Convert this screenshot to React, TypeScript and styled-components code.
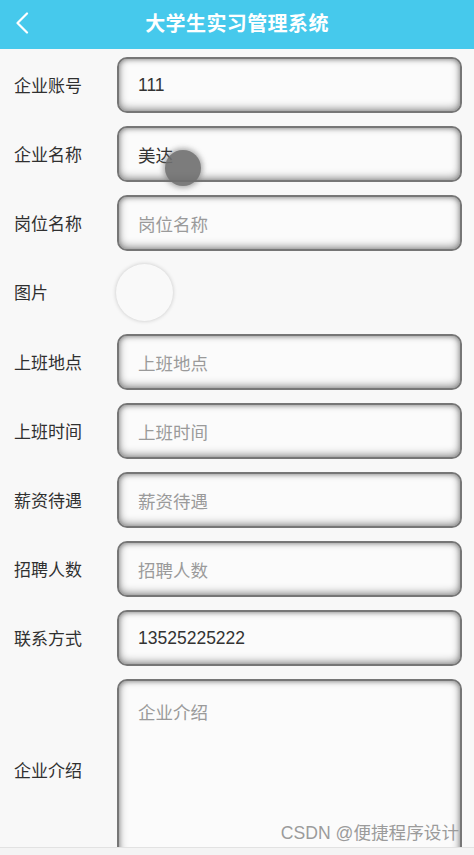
import styled, { createGlobalStyle } from "styled-components";

const GlobalStyle = createGlobalStyle`
  html, body {
    margin: 0;
    padding: 0;
    height: 100%;
    overflow: hidden;
    background: #f8f8f8;
    font-family: "Liberation Sans", "Noto Sans CJK SC", sans-serif;
  }
  #root {
    height: 100%;
  }
`;

const fields = [
  { label: "企业账号", value: "111" },
  { label: "企业名称", value: "美达" },
  { label: "岗位名称", placeholder: "岗位名称" },
  { label: "图片", picture: true },
  { label: "上班地点", placeholder: "上班地点" },
  { label: "上班时间", placeholder: "上班时间" },
  { label: "薪资待遇", placeholder: "薪资待遇" },
  { label: "招聘人数", placeholder: "招聘人数" },
  { label: "联系方式", value: "13525225222" },
];

export default function App() {
  return (
    <Page>
      <GlobalStyle />
      <Header>
        <BackButton>
          <svg width="14" height="22" viewBox="0 0 14 22">
            <path d="M12 1.5 L2.5 11 L12 20.5" fill="none" stroke="#fff" strokeWidth="2.2" strokeLinecap="round" strokeLinejoin="round" />
          </svg>
        </BackButton>
        <Title>大学生实习管理系统</Title>
      </Header>

      <Content>
        <Form>
          {fields.map((f, i) => (
            <Row key={i}>
              <Label>{f.label}</Label>
              {f.picture ? (
                <Avatar />
              ) : (
                <Field $empty={!f.value}>
                  {f.value || f.placeholder}
                  {i === 1 && <TouchDot />}
                </Field>
              )}
            </Row>
          ))}
          <Row>
            <Label>企业介绍</Label>
            <TextArea>企业介绍</TextArea>
          </Row>
        </Form>
        <Watermark>CSDN @便捷程序设计</Watermark>
      </Content>

      <BottomStrip />
    </Page>
  );
}

const Page = styled.div`
  display: flex;
  flex-direction: column;
  height: 855px;
  background: #f8f8f8;
`;

const Header = styled.header`
  position: relative;
  flex: 0 0 49px;
  display: flex;
  align-items: center;
  justify-content: center;
  background: #46c9ec;
`;

const BackButton = styled.div`
  position: absolute;
  left: 15px;
  top: 12px;
  display: flex;
`;

const Title = styled.h1`
  margin: 0 0 4px 0;
  color: #fff;
  font-size: 20px;
  font-weight: bold;
  letter-spacing: 0.4px;
`;

const Content = styled.main`
  position: relative;
  flex: 1;
  overflow: hidden;
`;

const Form = styled.div`
  display: flex;
  flex-direction: column;
  gap: 13px;
  padding: 8px 12px 0 14px;
`;

const Row = styled.div`
  display: flex;
  align-items: center;
  min-height: 56px;
`;

const Label = styled.div`
  flex: 0 0 103px;
  margin-top: -2px;
  font-size: 17px;
  color: #303030;
`;

const Field = styled.div<{ $empty?: boolean }>`
  position: relative;
  flex: 1;
  height: 56px;
  box-sizing: border-box;
  display: flex;
  align-items: center;
  padding-left: 19px;
  border: 2px solid #767676;
  border-radius: 10px;
  background: #fbfbfb;
  box-shadow: inset 0 -2px 8px rgba(0, 0, 0, 0.42), inset 0 1px 4px rgba(0, 0, 0, 0.25);
  font-size: 17.5px;
  color: ${(p) => (p.$empty ? "#9a9a9a" : "#333")};
`;

const TextArea = styled(Field)`
  height: 182px;
  align-items: flex-start;
  padding-top: 18px;
  color: #9a9a9a;
`;

const Avatar = styled.div`
  width: 57px;
  height: 57px;
  margin-left: -1px;
  border-radius: 50%;
  background: #f9f9f9;
  box-shadow: 0 0 4px rgba(0, 0, 0, 0.2);
`;

const TouchDot = styled.span`
  position: absolute;
  left: 46px;
  top: 22px;
  width: 36px;
  height: 36px;
  border-radius: 50%;
  background: #6f6f6f;
  opacity: 0.9;
  box-shadow: 0 0 5px 2px rgba(110, 110, 110, 0.6);
`;

const Watermark = styled.div`
  position: absolute;
  right: 15px;
  bottom: 3px;
  font-size: 17.6px;
  color: #9b9b9b;
`;

const BottomStrip = styled.div`
  flex: 0 0 7px;
  background: #f4f4f4;
  border-top: 1px solid #e2e2e2;
`;
